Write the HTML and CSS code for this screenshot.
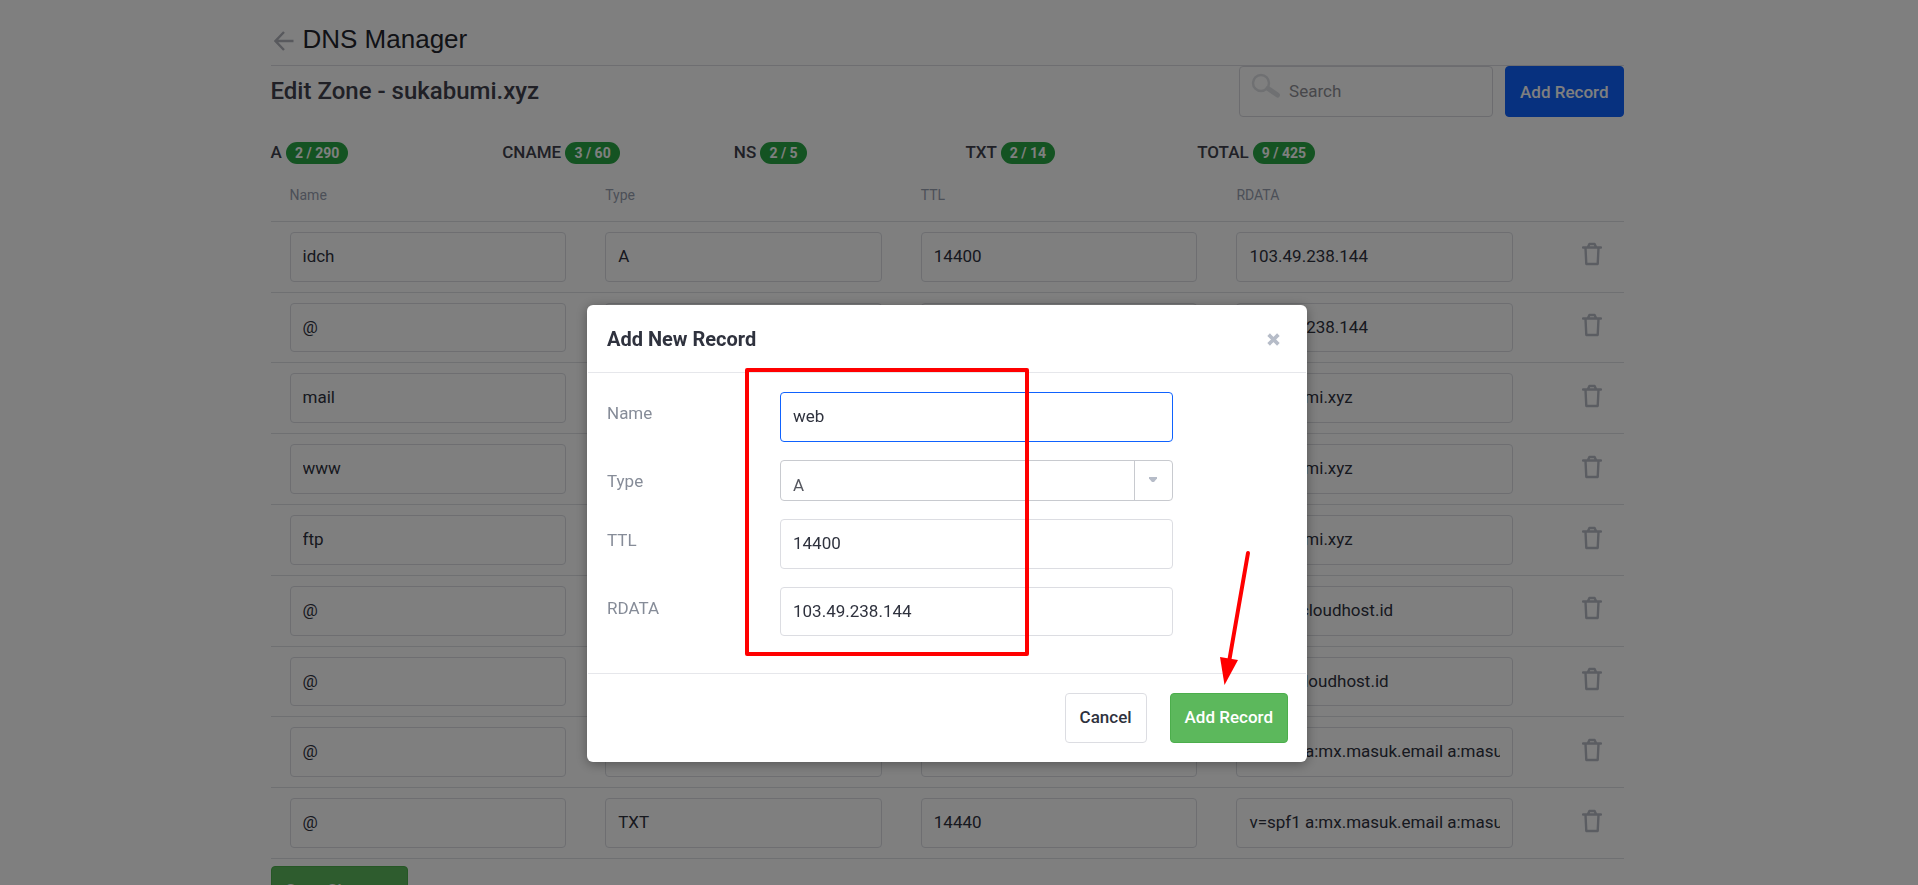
FILE: index.html
```html
<!DOCTYPE html>
<html lang="en">
<head>
<meta charset="utf-8">
<title>DNS Manager</title>
<link rel="stylesheet" href="styles.css">
</head>
<body>
<svg class="sprite" aria-hidden="true">
  <symbol id="trash" viewBox="0 0 20 24">
    <path d="M1 5.500h18M6 5 7.400 2h5.200L14 5M3.500 6l.8 16h11.400l.8-16" fill="none" stroke="currentColor" stroke-width="2.400" stroke-linejoin="round" stroke-linecap="round"/>
  </symbol>
</svg>
<main class="page">
  <header class="page-head">
    <a class="back" href="#" aria-label="Back"><svg width="20" height="20" viewBox="0 0 20 20"><path d="M19.500 10H1.500M10 1 1.500 10l8.500 9" fill="none" stroke="currentColor" stroke-width="2.400"/></svg></a>
    <h1 class="page-title">DNS Manager</h1>
  </header>
  <section class="toolbar">
    <h2 class="zone-title">Edit Zone - sukabumi.xyz</h2>
    <label class="search">
      <svg class="search-icon" width="30" height="26" viewBox="0 0 30 26"><circle cx="10" cy="10" r="8" fill="none" stroke="currentColor" stroke-width="2.500"/><path d="m17 15.500 9.500 6.500" stroke="currentColor" stroke-width="5" stroke-linecap="round"/></svg>
      <input class="search-input" type="search" placeholder="Search" aria-label="Search">
    </label>
    <button class="btn btn-primary" type="button">Add Record</button>
  </section>
  <ul class="stats">
    <li>A <span class="pill">2 / 290</span></li>
    <li>CNAME <span class="pill">3 / 60</span></li>
    <li>NS <span class="pill">2 / 5</span></li>
    <li>TXT <span class="pill">2 / 14</span></li>
    <li>TOTAL <span class="pill">9 / 425</span></li>
  </ul>
  <table class="records">
    <colgroup><col class="col-field"><col class="col-field"><col class="col-field"><col class="col-field"><col></colgroup>
    <thead><tr><th>Name</th><th>Type</th><th>TTL</th><th>RDATA</th><th></th></tr></thead>
    <tbody>
      <tr><td><input class="field" aria-label="Name" value="idch"></td><td><input class="field" aria-label="Type" value="A"></td><td><input class="field" aria-label="TTL" value="14400"></td><td><input class="field" aria-label="RDATA" value="103.49.238.144"></td><td class="act"><button class="trash" type="button" aria-label="Delete"><svg width="20" height="24"><use href="#trash"/></svg></button></td></tr>
      <tr><td><input class="field" aria-label="Name" value="@"></td><td><input class="field" aria-label="Type" value="A"></td><td><input class="field" aria-label="TTL" value="14400"></td><td><input class="field" aria-label="RDATA" value="103.49.238.144"></td><td class="act"><button class="trash" type="button" aria-label="Delete"><svg width="20" height="24"><use href="#trash"/></svg></button></td></tr>
      <tr><td><input class="field" aria-label="Name" value="mail"></td><td><input class="field" aria-label="Type" value="CNAME"></td><td><input class="field" aria-label="TTL" value="14400"></td><td><input class="field" aria-label="RDATA" value="sukabumi.xyz"></td><td class="act"><button class="trash" type="button" aria-label="Delete"><svg width="20" height="24"><use href="#trash"/></svg></button></td></tr>
      <tr><td><input class="field" aria-label="Name" value="www"></td><td><input class="field" aria-label="Type" value="CNAME"></td><td><input class="field" aria-label="TTL" value="14400"></td><td><input class="field" aria-label="RDATA" value="sukabumi.xyz"></td><td class="act"><button class="trash" type="button" aria-label="Delete"><svg width="20" height="24"><use href="#trash"/></svg></button></td></tr>
      <tr><td><input class="field" aria-label="Name" value="ftp"></td><td><input class="field" aria-label="Type" value="CNAME"></td><td><input class="field" aria-label="TTL" value="14400"></td><td><input class="field" aria-label="RDATA" value="sukabumi.xyz"></td><td class="act"><button class="trash" type="button" aria-label="Delete"><svg width="20" height="24"><use href="#trash"/></svg></button></td></tr>
      <tr><td><input class="field" aria-label="Name" value="@"></td><td><input class="field" aria-label="Type" value="NS"></td><td><input class="field" aria-label="TTL" value="14400"></td><td><input class="field" aria-label="RDATA" value="ns1.id.cloudhost.id"></td><td class="act"><button class="trash" type="button" aria-label="Delete"><svg width="20" height="24"><use href="#trash"/></svg></button></td></tr>
      <tr><td><input class="field" aria-label="Name" value="@"></td><td><input class="field" aria-label="Type" value="NS"></td><td><input class="field" aria-label="TTL" value="14400"></td><td><input class="field" aria-label="RDATA" value="ns2.idcloudhost.id"></td><td class="act"><button class="trash" type="button" aria-label="Delete"><svg width="20" height="24"><use href="#trash"/></svg></button></td></tr>
      <tr><td><input class="field" aria-label="Name" value="@"></td><td><input class="field" aria-label="Type" value="TXT"></td><td><input class="field" aria-label="TTL" value="14440"></td><td><input class="field" aria-label="RDATA" value="v=spf1 a:mx.masuk.email a:masuk.email"></td><td class="act"><button class="trash" type="button" aria-label="Delete"><svg width="20" height="24"><use href="#trash"/></svg></button></td></tr>
      <tr><td><input class="field" aria-label="Name" value="@"></td><td><input class="field" aria-label="Type" value="TXT"></td><td><input class="field" aria-label="TTL" value="14440"></td><td><input class="field" aria-label="RDATA" value="v=spf1 a:mx.masuk.email a:masuk.email"></td><td class="act"><button class="trash" type="button" aria-label="Delete"><svg width="20" height="24"><use href="#trash"/></svg></button></td></tr>
    </tbody>
  </table>
  <button class="btn btn-success save" type="button">Save Changes</button>
</main>

<div class="backdrop">
  <form class="modal" role="dialog" aria-labelledby="modal-title">
    <header class="modal-head">
      <h3 class="modal-title" id="modal-title">Add New Record</h3>
      <button class="close" type="button" aria-label="Close"><svg width="13" height="13" viewBox="0 0 12 12"><path d="m1.500 1.500 9 9m0-9-9 9" stroke="currentColor" stroke-width="3.400"/></svg></button>
    </header>
    <div class="modal-body">
      <label for="f-name">Name</label>
      <input class="field focused" id="f-name" value="web">
      <label for="f-type">Type</label>
      <span class="select-wrap">
        <select class="select" id="f-type"><option>A</option><option>CNAME</option><option>NS</option><option>TXT</option></select>
        <span class="select-arrow"><svg width="8" height="6" viewBox="0 0 8 6"><path d="M0 0h8v1.500L5 5H3L0 1.500z" fill="currentColor"/></svg></span>
      </span>
      <label for="f-ttl">TTL</label>
      <input class="field" id="f-ttl" value="14400">
      <label for="f-rdata">RDATA</label>
      <input class="field" id="f-rdata" value="103.49.238.144">
    </div>
    <footer class="modal-foot">
      <button class="btn btn-plain" type="button">Cancel</button>
      <button class="btn btn-success" type="button">Add Record</button>
    </footer>
    <div class="mark-box"></div>
    <svg class="mark-arrow" width="32" height="136" viewBox="0 0 32 136"><path d="M28 3 9 112" stroke="currentColor" stroke-width="4" stroke-linecap="round"/><path d="M0 107l18 3L4.500 135z" fill="currentColor"/></svg>
  </form>
</div>
</body>
</html>
```
FILE: styles.css
```css
* { box-sizing: border-box; }

body {
  margin: 0;
  height: 100vh;
  overflow: hidden;
  background: #fff;
  color: #2f323e;
  font-family: Roboto, "Liberation Sans", sans-serif;
  font-size: 17px;
  line-height: 1.4;
}

h1, h2, h3, ul { margin: 0; padding: 0; }
input, button, select { font: inherit; color: inherit; }
.sprite { display: none; }

.page {
  max-width: 1353px;
  margin: 0 auto;
}

body, .backdrop { padding-right: 24px; }

.page-head {
  display: flex;
  align-items: center;
  gap: 9px;
  height: 66px;
  padding: 14px 3px 0;
  border-bottom: 1px solid #dcdde2;
}
.back { display: flex; padding-top: 2px; color: #b0b2bb; }
.page-title {
  color: #23242c;
  font-family: "Liberation Sans", Arial, sans-serif;
  font-size: 26px;
  font-weight: 400;
}

.toolbar { display: flex; gap: 12px; }
.zone-title {
  flex: 1;
  padding-top: 9px;
  color: #40414d;
  font-size: 24px;
  font-weight: 500;
}
.search { position: relative; display: flex; }
.search-icon { position: absolute; left: 12px; top: 7px; color: #dfe1e5; }
.search-input {
  width: 254px;
  padding: 12px 12px 12px 49px;
  border: 1px solid #d8d9df;
  border-radius: 4px;
  background: none;
  appearance: none;
}
.search-input::placeholder { color: #8f8f96; opacity: 1; }

.btn {
  height: 50px;
  padding: 0 14px;
  border: 1px solid;
  border-radius: 4px;
  font-weight: 500;
  white-space: nowrap;
}
.btn-primary { height: 51px; padding-top: 3px; border-color: #0f62fe; background: #0f62fe; color: #fff; }
.btn-success { border-color: #4cae4c; background: #5cb85c; color: #fff; }
.btn-plain { border-color: #dcdde2; background: #fff; }

.stats {
  display: grid;
  grid-template-columns: repeat(6, 1fr);
  gap: 37px;
  padding-top: 24px;
  list-style: none;
  color: #40414d;
  font-weight: 500;
}
.stats li { white-space: nowrap; }
.pill {
  display: inline-block;
  padding: 0 9px;
  border-radius: 11px;
  background: #28a745;
  color: #fff;
  font-size: 14px;
  font-weight: 700;
  line-height: 22px;
}

.records { width: 100%; border-collapse: collapse; table-layout: fixed; }
.col-field { width: 23.33%; }
.records tr { border-bottom: 1px solid #dfe0e4; }
.records th {
  padding: 20px 19px 16px;
  color: #98a0b0;
  font-size: 14px;
  font-weight: 400;
  line-height: 20px;
  text-align: left;
}
.records td { padding: 10px 20px 10px 19px; }
.records .act { padding: 0 22px 5px 0; text-align: right; }
.trash { padding: 0; border: 0; background: none; color: #b6bac4; vertical-align: middle; }
.trash svg { display: block; }

.field {
  display: block;
  width: 100%;
  padding: 12px;
  border: 1px solid #dcdde2;
  border-radius: 4px;
  background: none;
  outline: 0;
}
.field.focused { border-color: #0f62fe; }
.save { width: 137px; margin-top: 7px; }

.backdrop {
  position: fixed;
  inset: 0;
  display: flex;
  align-items: flex-start;
  justify-content: center;
  padding-top: 305px;
  background: rgba(0, 0, 0, .5);
}
.modal {
  position: relative;
  width: 720px;
  padding: 0 1px;
  border-radius: 6px;
  background: #fff;
  box-shadow: 0 2px 12px rgba(0, 0, 0, .35);
}
.modal-head {
  display: flex;
  align-items: center;
  justify-content: space-between;
  padding: 20px 26px 19px 19px;
  border-bottom: 1px solid #e6e7eb;
}
.modal-title { font-size: 20px; font-weight: 700; }
.close { display: flex; padding: 0; border: 0; background: none; color: #b6bcc8; }
.modal-body {
  display: grid;
  grid-template-columns: 155px 393px;
  column-gap: 18px;
  row-gap: 18px;
  padding: 19px 19px 37px;
  border-bottom: 1px solid #e6e7eb;
}
.modal-body label { padding-top: 10px; color: #868c98; }
.select-wrap { position: relative; display: block; }
.select {
  display: block;
  width: 100%;
  height: 41px;
  padding: 12px 50px 0 12px;
  border: 1px solid #c8cacf;
  border-radius: 4px;
  background: none;
  color: #55575f;
  appearance: none;
}
.select-arrow {
  position: absolute;
  inset: 0 0 0 auto;
  display: flex;
  align-items: center;
  justify-content: center;
  width: 39px;
  padding-right: 2px;
  border-left: 1px solid #c8cacf;
  color: #b6bcc8;
  pointer-events: none;
}
.modal-foot {
  display: flex;
  justify-content: flex-end;
  gap: 23px;
  padding: 19px 18px 19px;
}

.mark-box {
  position: absolute;
  top: 63px;
  left: 158px;
  width: 284px;
  height: 288px;
  border: 4px solid #f00;
  border-radius: 2px;
  pointer-events: none;
}
.mark-arrow { position: absolute; top: 245px; left: 633px; color: #f00; pointer-events: none; }
```
